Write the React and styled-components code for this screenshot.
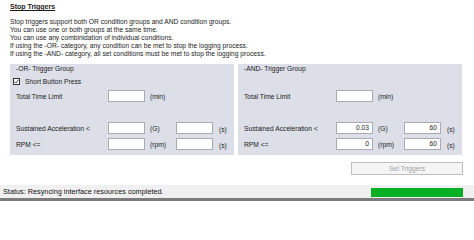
import React from 'react';
import styled, { createGlobalStyle } from 'styled-components';

const GlobalStyle = createGlobalStyle`
  html, body {
    margin: 0;
    padding: 0;
    background: #ffffff;
  }
  body {
    font-family: "Liberation Sans", Arial, sans-serif;
    color: #1b1b1b;
  }
`;

const Page = styled.div`
  width: 474px;
  height: 201px;
  display: flex;
  flex-direction: column;
  overflow: hidden;
`;

const Title = styled.div`
  padding: 2px 0 0 10px;
  height: 10px;
  font-size: 7px;
  line-height: 10px;
  font-weight: bold;
  text-decoration: underline;
`;

const Description = styled.div`
  margin-top: 6px;
  padding-left: 10px;
  font-size: 6.7px;
  line-height: 8px;
  white-space: nowrap;
`;

const Groups = styled.div`
  display: flex;
  gap: 4px;
  margin-top: 6px;
  padding: 0 12px 0 10px;
`;

const Group = styled.div`
  flex: 1;
  background: #dcdfe8;
  padding: 0 0 5px 6px;
  display: flex;
  flex-direction: column;
  font-size: 6.7px;
`;

const GroupTitle = styled.div`
  height: 9px;
  line-height: 9px;
`;

const Row = styled.div`
  display: grid;
  grid-template-columns: 92px 37px 31px 37px auto;
  align-items: center;
  height: 12px;
  margin-top: ${p => p.gap || 0}px;
`;

const CheckRow = styled.div`
  display: flex;
  align-items: center;
  gap: 5px;
  height: 10px;
  margin-top: 3px;
  margin-left: -3px;
`;

const Box = styled.span`
  width: 7px;
  height: 7px;
  box-sizing: border-box;
  border: 1px solid #333;
  background: #fff;
  display: flex;
  align-items: center;
  justify-content: center;
`;

const Label = styled.span`
  white-space: nowrap;
`;

const Unit = styled.span`
  padding-left: ${p => p.pad || 5}px;
  padding-top: ${p => (p.low ? 2 : 0)}px;
  white-space: nowrap;
`;

const Field = styled.div`
  height: 12px;
  box-sizing: border-box;
  border: 1px solid #a9abb2;
  background: #fff;
  text-align: right;
  padding-right: 3px;
  font-size: 6.7px;
  line-height: 10px;
`;

const ButtonRow = styled.div`
  display: flex;
  justify-content: flex-end;
  padding-right: 11px;
  margin-top: 7px;
`;

const Button = styled.div`
  width: 112px;
  height: 13px;
  box-sizing: border-box;
  border: 1px solid #bfbfbf;
  background: #f4f4f4;
  color: #a3a3a3;
  font-size: 6.7px;
  line-height: 11px;
  text-align: center;
`;

const StatusBar = styled.div`
  margin-top: auto;
  height: 13px;
  background: #f0f0f0;
  border-bottom: 3px solid #7c7c7c;
  display: flex;
  align-items: center;
  justify-content: space-between;
  padding: 0 11px 0 3px;
`;

const StatusText = styled.span`
  font-size: 7.3px;
  color: #111;
  white-space: nowrap;
`;

const Progress = styled.div`
  width: 92px;
  height: 9px;
  background: #06b025;
  margin-top: 1px;
`;

const Check = () => (
  <svg width="5" height="5" viewBox="0 0 10 10">
    <path d="M1 5 L4 8 L9 1.5" fill="none" stroke="#222" strokeWidth="1.6" />
  </svg>
);

const GroupFields = ({ values }) => (
  <>
    <Row gap={4}>
      <Label>Total Time Limit</Label>
      <Field>{values.time}</Field>
      <Unit>(min)</Unit>
    </Row>
    <Row gap={20}>
      <Label>Sustained Acceleration &lt;</Label>
      <Field>{values.accel}</Field>
      <Unit>(G)</Unit>
      <Field>{values.accelSec}</Field>
      <Unit pad={6} low>(s)</Unit>
    </Row>
    <Row gap={4}>
      <Label>RPM &lt;=</Label>
      <Field>{values.rpm}</Field>
      <Unit>(rpm)</Unit>
      <Field>{values.rpmSec}</Field>
      <Unit pad={6} low>(s)</Unit>
    </Row>
  </>
);

const lines = [
  'Stop triggers support both OR condition groups and AND condition groups.',
  'You can use one or both groups at the same time.',
  'You can use any combinidation of individual conditions.',
  'If using the -OR- category, any condition can be met to stop the logging process.',
  'If using the -AND- category, all set conditions must be met to stop the logging process.',
];

export default function App() {
  return (
    <Page>
      <GlobalStyle />
      <Title>Stop Triggers</Title>
      <Description>
        {lines.map(l => <div key={l}>{l}</div>)}
      </Description>
      <Groups>
        <Group>
          <GroupTitle>-OR- Trigger Group</GroupTitle>
          <CheckRow>
            <Box><Check /></Box>
            <Label>Short Button Press</Label>
          </CheckRow>
          <GroupFields values={{}} />
        </Group>
        <Group>
          <GroupTitle>-AND- Trigger Group</GroupTitle>
          <CheckRow />
          <GroupFields values={{ accel: '0.03', accelSec: '60', rpm: '0', rpmSec: '60' }} />
        </Group>
      </Groups>
      <ButtonRow>
        <Button>Set Triggers</Button>
      </ButtonRow>
      <StatusBar>
        <StatusText>Status: Resyncing interface resources completed.</StatusText>
        <Progress />
      </StatusBar>
    </Page>
  );
}
